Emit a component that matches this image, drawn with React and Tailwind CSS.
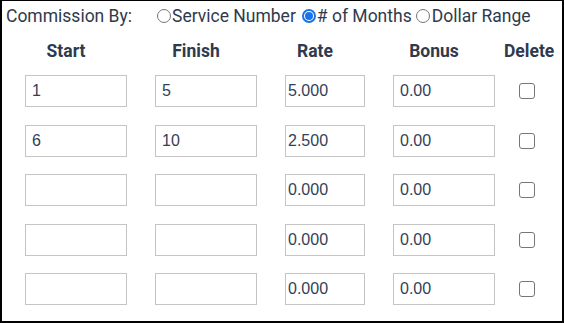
import React from "react";

const rows = [
  ["1", "5", "5.000", "0.00"],
  ["6", "10", "2.500", "0.00"],
  ["", "", "0.000", "0.00"],
  ["", "", "0.000", "0.00"],
  ["", "", "0.000", "0.00"],
];

function Radio({ checked }) {
  return (
    <span className="inline-flex w-[14px] h-[14px] rounded-full border border-[#767676] items-center justify-center shrink-0 box-border"
      style={checked ? { borderColor: "#1a73e8", borderWidth: 2 } : undefined}>
      {checked && <span className="w-[8px] h-[8px] rounded-full bg-[#1a73e8]" />}
    </span>
  );
}

function Field({ value, w, pl = "pl-[6px]" }) {
  return (
    <div className={`ml-[19px] h-[32px] border border-[#c4c4c4] bg-white flex items-center text-[16px] text-[#34405a] ${pl} ${w}`}>
      {value}
    </div>
  );
}

export default function App() {
  return (
    <div className="w-[564px] h-[323px] bg-white border-t border-x-2 border-b-2 border-black box-border overflow-hidden" style={{ fontFamily: "Roboto, sans-serif" }}>
      <div className="flex items-center h-[30px] pl-[4px] text-[17.5px] text-[#2f3a4d]">
        <span>Commission By:</span>
        <span className="ml-[25px] flex items-center"><Radio /><span className="ml-[1px]">Service Number</span></span>
        <span className="ml-[6px] flex items-center"><Radio checked /><span className="ml-[1px]">#&nbsp;of Months</span></span>
        <span className="ml-[4px] flex items-center"><Radio /><span className="ml-[2px]">Dollar Range</span></span>
      </div>
      <div className="grid grid-cols-[120px_120px_98px_120px_46px] gap-x-[10px] pl-[4px] font-bold text-[17.5px] text-[#2f3a4d] mt-[7px] h-[31px]">
        <div className="text-center">Start</div>
        <div className="text-center">Finish</div>
        <div className="text-center">Rate</div>
        <div className="text-center">Bonus</div>
        <div className="text-center">Delete</div>
      </div>
      <div className="grid grid-cols-[120px_120px_98px_120px_46px] gap-x-[10px] gap-y-[17.5px] pl-[4px] mt-[6px]" style={{ fontFamily: "'Liberation Sans', Arial, sans-serif" }}>
        {rows.map((r, i) => (
          <React.Fragment key={i}>
            <Field value={r[0]} w="w-[102px]" />
            <Field value={r[1]} w="w-[102px]" />
            <Field value={r[2]} w="w-[80px]" pl="pl-[2px]" />
            <Field value={r[3]} w="w-[102px]" />
            <div className="flex items-center justify-center">
              <span className="w-[16px] h-[16px] rounded-[3px] border-[1.5px] border-[#767676] bg-white" />
            </div>
          </React.Fragment>
        ))}
      </div>
    </div>
  );
}
